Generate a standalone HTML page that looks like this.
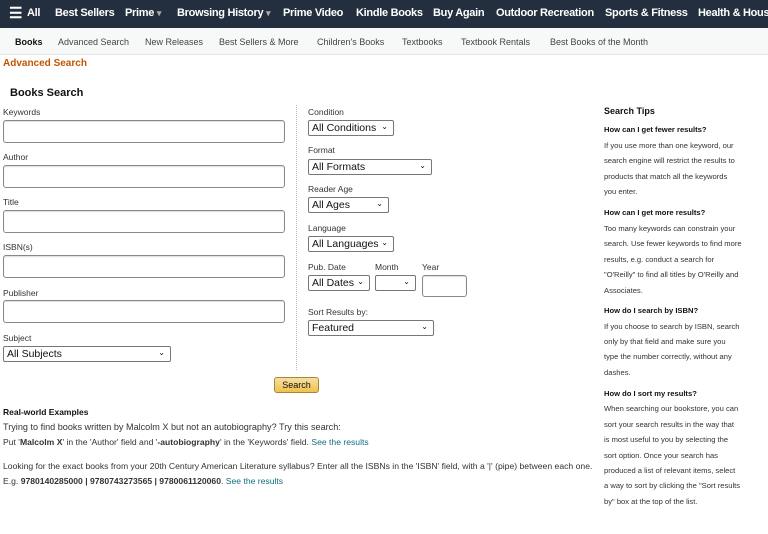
<!DOCTYPE html><html><head><meta charset="utf-8"><style>
*{margin:0;padding:0;box-sizing:border-box}
body{width:768px;height:534px;overflow:hidden;background:#fff;font-family:"Liberation Sans",sans-serif;color:#111;position:relative}
.a{position:absolute;white-space:nowrap}
#top{position:absolute;left:0;top:0;width:768px;height:28px;background:#232f3e;color:#fff;font-size:11px;font-weight:bold;letter-spacing:-0.3px;overflow:hidden}
#top span{position:absolute;top:7px;white-space:nowrap}
#sub{position:absolute;left:0;top:28px;width:768px;height:27px;background:#f7f8f8;border-bottom:1px solid #e3e6e6;font-size:9px;color:#444}
#sub span{position:absolute;top:9px;white-space:nowrap}
.l{font-size:8.5px;color:#333}
.in{position:absolute;border:1px solid #888;border-radius:3px;background:#fff;box-shadow:inset 0 1px 1px #ddd}
.se{position:absolute;border:1px solid #777;border-radius:2px;background:#fff;font-size:10.5px;padding:1px 3px;color:#111;white-space:nowrap}
.se i{position:absolute;right:5px;top:1px;font-style:normal;font-size:8px}
.t{font-size:7.6px;color:#333;left:604px}
.tb{font-size:7.6px;font-weight:bold;left:604px}
.e{font-size:9.1px;color:#333;left:3px}
.lk{color:#0f6e7e}
</style></head><body>
<div id="top">
<span style="left:9px;top:4px;font-size:15px">☰</span><span style="left:27px">All</span>
<span style="left:55px">Best Sellers</span><span style="left:125px">Prime <small style="color:#aaa">▾</small></span>
<span style="left:177px">Browsing History <small style="color:#aaa">▾</small></span><span style="left:283px">Prime Video</span>
<span style="left:356px">Kindle Books</span><span style="left:433px">Buy Again</span>
<span style="left:496px">Outdoor Recreation</span><span style="left:605px">Sports &amp; Fitness</span><span style="left:698px">Health &amp; Household</span>
</div>
<div id="sub">
<span style="left:15px;font-weight:bold;color:#111">Books</span><span style="left:58px">Advanced Search</span>
<span style="left:145px">New Releases</span><span style="left:219px">Best Sellers &amp; More</span>
<span style="left:317px">Children's Books</span><span style="left:402px">Textbooks</span>
<span style="left:461px">Textbook Rentals</span><span style="left:550px">Best Books of the Month</span>
</div>
<div class="a" style="left:3px;top:58px;font-size:10px;font-weight:bold;color:#c45500">Advanced Search</div>
<div class="a" style="left:10px;top:87px;font-size:11px;font-weight:bold">Books Search</div>
<div class="a l" style="left:3px;top:107px">Keywords</div><div class="in" style="left:3px;top:120px;width:282px;height:23px"></div>
<div class="a l" style="left:3px;top:152px">Author</div><div class="in" style="left:3px;top:165px;width:282px;height:23px"></div>
<div class="a l" style="left:3px;top:197px">Title</div><div class="in" style="left:3px;top:210px;width:282px;height:23px"></div>
<div class="a l" style="left:3px;top:242px">ISBN(s)</div><div class="in" style="left:3px;top:255px;width:282px;height:23px"></div>
<div class="a l" style="left:3px;top:288px">Publisher</div><div class="in" style="left:3px;top:300px;width:282px;height:23px"></div>
<div class="a l" style="left:3px;top:333px">Subject</div><div class="se" style="left:3px;top:346px;width:168px;height:16px">All Subjects<i>⌄</i></div>
<div class="a" style="left:296px;top:105px;height:265px;border-left:1px dotted #bbb"></div>
<div class="a l" style="left:308px;top:107px">Condition</div><div class="se" style="left:308px;top:120px;width:86px;height:16px">All Conditions<i>⌄</i></div>
<div class="a l" style="left:308px;top:145px">Format</div><div class="se" style="left:308px;top:159px;width:124px;height:16px">All Formats<i>⌄</i></div>
<div class="a l" style="left:308px;top:184px">Reader Age</div><div class="se" style="left:308px;top:197px;width:81px;height:16px">All Ages<i>⌄</i></div>
<div class="a l" style="left:308px;top:223px">Language</div><div class="se" style="left:308px;top:236px;width:86px;height:16px">All Languages<i>⌄</i></div>
<div class="a l" style="left:308px;top:262px">Pub. Date</div><div class="a l" style="left:375px;top:262px">Month</div><div class="a l" style="left:422px;top:262px">Year</div>
<div class="se" style="left:308px;top:275px;width:62px;height:16px">All Dates<i>⌄</i></div>
<div class="se" style="left:375px;top:275px;width:41px;height:16px"><i>⌄</i></div>
<div class="in" style="left:422px;top:275px;width:45px;height:22px"></div>
<div class="a l" style="left:308px;top:307px">Sort Results by:</div><div class="se" style="left:308px;top:320px;width:126px;height:16px">Featured<i>⌄</i></div>
<div class="a" style="left:274px;top:377px;width:45px;height:16px;border:1px solid #a88734;border-radius:3px;background:linear-gradient(#f7dfa5,#f0c14b);font-size:9px;text-align:center;line-height:14px">Search</div>
<div class="a" style="left:604px;top:106px;font-size:9px;font-weight:bold">Search Tips</div>
<div class="a tb" style="top:125px">How can I get fewer results?</div>
<div class="a t" style="top:141px">If you use more than one keyword, our</div>
<div class="a t" style="top:156px">search engine will restrict the results to</div>
<div class="a t" style="top:172px">products that match all the keywords</div>
<div class="a t" style="top:187px">you enter.</div>
<div class="a tb" style="top:208px">How can I get more results?</div>
<div class="a t" style="top:224px">Too many keywords can constrain your</div>
<div class="a t" style="top:239px">search. Use fewer keywords to find more</div>
<div class="a t" style="top:255px">results, e.g. conduct a search for</div>
<div class="a t" style="top:270px">"O'Reilly" to find all titles by O'Reilly and</div>
<div class="a t" style="top:286px">Associates.</div>
<div class="a tb" style="top:306px">How do I search by ISBN?</div>
<div class="a t" style="top:322px">If you choose to search by ISBN, search</div>
<div class="a t" style="top:337px">only by that field and make sure you</div>
<div class="a t" style="top:352px">type the number correctly, without any</div>
<div class="a t" style="top:368px">dashes.</div>
<div class="a tb" style="top:389px">How do I sort my results?</div>
<div class="a t" style="top:404px">When searching our bookstore, you can</div>
<div class="a t" style="top:420px">sort your search results in the way that</div>
<div class="a t" style="top:435px">is most useful to you by selecting the</div>
<div class="a t" style="top:451px">sort option. Once your search has</div>
<div class="a t" style="top:466px">produced a list of relevant items, select</div>
<div class="a t" style="top:481px">a way to sort by clicking the "Sort results</div>
<div class="a t" style="top:497px">by" box at the top of the list.</div>
<div class="a e" style="top:407px;font-weight:bold;color:#111;font-size:8.5px">Real-world Examples</div>
<div class="a e" style="top:422px">Trying to find books written by Malcolm X but not an autobiography? Try this search:</div>
<div class="a e" style="top:437px;font-size:8.6px">Put '<b>Malcolm X</b>' in the 'Author' field and '<b>-autobiography</b>' in the 'Keywords' field. <span class="lk">See the results</span></div>
<div class="a e" style="top:461px;font-size:8.65px">Looking for the exact books from your 20th Century American Literature syllabus? Enter all the ISBNs in the 'ISBN' field, with a '|' (pipe) between each one.</div>
<div class="a e" style="top:476px;font-size:8.6px">E.g. <b>9780140285000 | 9780743273565 | 9780061120060</b>. <span class="lk">See the results</span></div>
</body></html>
